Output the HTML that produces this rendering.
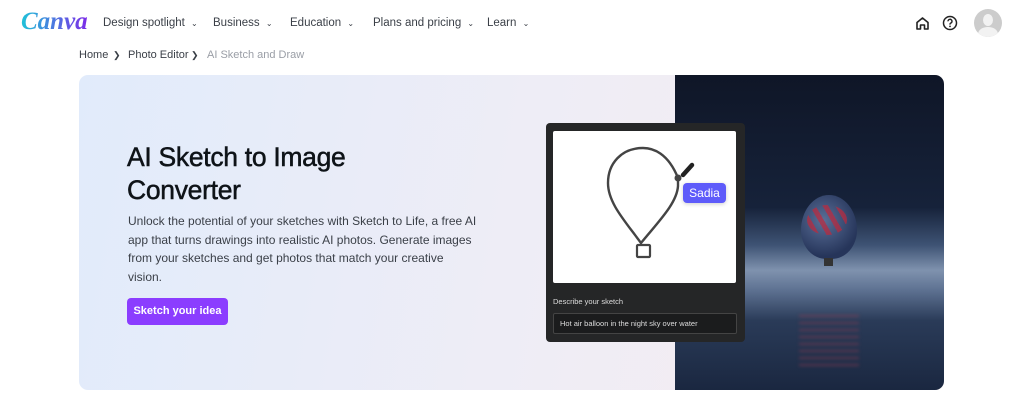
<!DOCTYPE html>
<html><head><style>
*{margin:0;padding:0;box-sizing:border-box}
body{width:1024px;height:415px;background:#fff;font-family:"Liberation Sans",sans-serif;position:relative;overflow:hidden;color:#0e1318}
.a{position:absolute}
.nav{font-size:11.5px;color:#3a3f47;top:17px}
.nav span{font-size:8px;margin-left:3px}
.bc{top:49px;font-size:11px;color:#3a3f47}
</style></head><body>
<div class="a" style="left:21px;top:8px;font-family:'Liberation Serif',serif;font-style:italic;font-size:25px;font-weight:bold;background:linear-gradient(90deg,#1ec3d8,#7d2ae8);-webkit-background-clip:text;color:transparent">Canva</div>
<div class="a nav" style="left:103px">Design spotlight <span>&#8964;</span></div>
<div class="a nav" style="left:213px">Business <span>&#8964;</span></div>
<div class="a nav" style="left:290px">Education <span>&#8964;</span></div>
<div class="a nav" style="left:373px">Plans and pricing <span>&#8964;</span></div>
<div class="a nav" style="left:487px">Learn <span>&#8964;</span></div>
<svg class="a" style="left:915px;top:16px" width="15" height="15" viewBox="0 0 15 15"><path d="M2 13V6.5L7.5 2 13 6.5V13H9.5V9h-4v4z" fill="none" stroke="#222" stroke-width="1.6" stroke-linejoin="round"/></svg>
<svg class="a" style="left:942px;top:15px" width="16" height="16" viewBox="0 0 16 16"><circle cx="8" cy="8" r="6.5" fill="none" stroke="#222" stroke-width="1.5"/><path d="M6 6.3a2 2 0 1 1 2.5 1.9c-.4.2-.5.5-.5 1v.4" fill="none" stroke="#222" stroke-width="1.4"/><circle cx="8" cy="11.4" r=".9" fill="#222"/></svg>
<div class="a" style="left:974px;top:9px;width:28px;height:28px;border-radius:50%;background:#ccc;overflow:hidden"><div class="a" style="left:9px;top:5px;width:10px;height:12px;border-radius:50%;background:#f2f2f2"></div><div class="a" style="left:4px;top:18px;width:20px;height:14px;border-radius:50%;background:#f2f2f2"></div></div>
<div class="a bc" style="left:79px">Home</div>
<div class="a bc" style="left:113px;font-size:9px;top:50px">&#10095;</div>
<div class="a bc" style="left:128px">Photo Editor</div>
<div class="a bc" style="left:191px;font-size:9px;top:50px">&#10095;</div>
<div class="a bc" style="left:207px;color:#9a9ea6">AI Sketch and Draw</div>
<div class="a" style="left:79px;top:75px;width:865px;height:315px;border-radius:9px;overflow:hidden;background:linear-gradient(100deg,#e1ebfb 0%,#eeedf6 50%,#f7ecef 100%)">
 <div class="a" style="left:596px;top:0;width:269px;height:315px;background:linear-gradient(180deg,#0f1627 0%,#16223a 42%,#3e5374 54%,#7f92ae 62%,#5f7393 68%,#2a3b58 78%,#1a2740 100%)"></div>
 <div class="a" style="left:722px;top:120px;width:56px;height:64px;border-radius:50% 50% 45% 45%/55% 55% 45% 45%;background:radial-gradient(circle at 40% 40%,#5a6f98,#26355a 70%)"></div>
 <div class="a" style="left:728px;top:130px;width:40px;height:30px;background:repeating-linear-gradient(60deg,transparent 0 6px,rgba(190,40,60,.7) 6px 11px);border-radius:50%"></div>
 <div class="a" style="left:745px;top:183px;width:9px;height:8px;background:#333"></div>
 <div class="a" style="left:720px;top:240px;width:60px;height:55px;background:repeating-linear-gradient(180deg,rgba(160,60,80,.45) 0 2px,transparent 2px 7px);filter:blur(1.5px)"></div>
</div>
<div class="a" style="left:127px;top:141px;font-size:26.5px;line-height:33px;letter-spacing:-.3px;-webkit-text-stroke:.5px #0e1318;color:#0e1318">AI Sketch to Image<br>Converter</div>
<div class="a" style="left:128px;top:212px;white-space:nowrap;font-size:12px;line-height:18.5px;color:#3a3f47">Unlock the potential of your sketches with Sketch to Life, a free AI<br>app that turns drawings into realistic AI photos. Generate images<br>from your sketches and get photos that match your creative<br>vision.</div>
<div class="a" style="left:127px;top:298px;width:101px;height:27px;border-radius:4px;background:#8b3dff;color:#fff;font-size:11px;font-weight:bold;text-align:center;line-height:27px">Sketch your idea</div>
<div class="a" style="left:546px;top:123px;width:199px;height:219px;background:#252627;border-radius:4px"></div>
<div class="a" style="left:553px;top:131px;width:183px;height:152px;background:#fff;border-radius:2px"></div>
<svg class="a" style="left:553px;top:131px" width="183" height="152" viewBox="0 0 183 152">
<path d="M125 47 C115 22 100 17 90 17 C68 17 55 33 55 52 C55 72 72 90 88 112 C106 90 124 72 125 55 Z" fill="none" stroke="#444" stroke-width="2.4" stroke-linejoin="round"/>
<path d="M88 112 L88 114" stroke="#444" stroke-width="2"/>
<rect x="84" y="114" width="13" height="12" rx="1" fill="none" stroke="#444" stroke-width="2.2"/>
<circle cx="125" cy="47" r="3.5" fill="#444"/>
<path d="M130 44 L139 34" stroke="#222" stroke-width="4.5" stroke-linecap="round"/>
</svg>
<div class="a" style="left:683px;top:183px;width:43px;height:20px;background:#5e5bfa;border-radius:4px;color:#fff;font-size:12px;text-align:center;line-height:20px;box-shadow:0 1px 4px rgba(0,0,0,.2)">Sadia</div>
<div class="a" style="left:553px;top:297px;font-size:7.5px;color:#ddd">Describe your sketch</div>
<div class="a" style="left:553px;top:313px;width:184px;height:21px;background:#1b1c1d;border:1px solid #444;border-radius:2px;font-size:7.5px;color:#ddd;line-height:19px;padding-left:6px">Hot air balloon in the night sky over water</div>
</body></html>
